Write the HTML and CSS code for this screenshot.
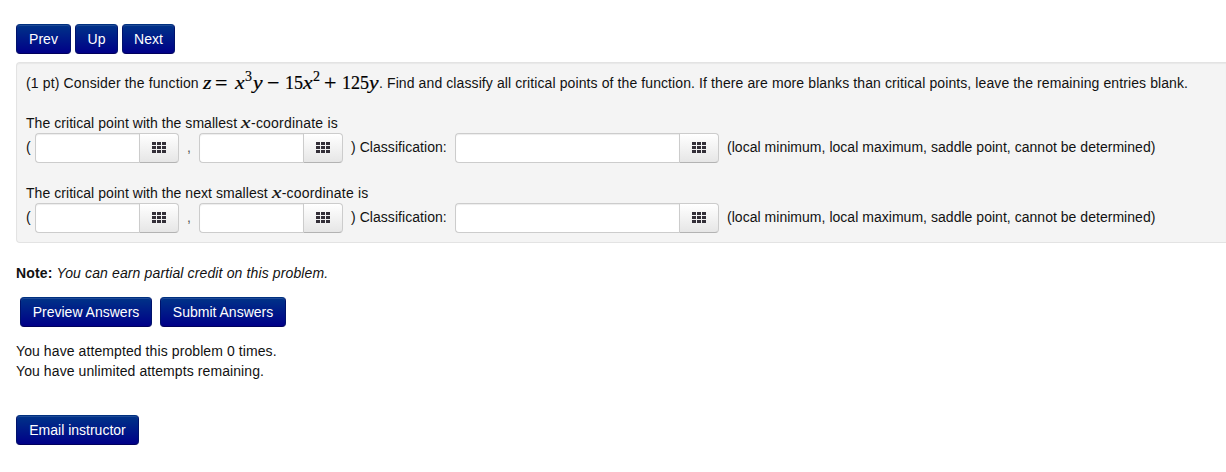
FILE: index.html
```html
<!DOCTYPE html>
<html lang="en">
<head>
  <meta charset="UTF-8">
  <title>Problem</title>
  <link rel="stylesheet" href="styles.css">
</head>
<body>
  <svg width="0" height="0" class="sprite">
    <symbol id="icon-th" viewBox="0 0 14 11">
      <path d="M0 0h4v3H0zM5 0h4v3H5zM10 0h4v3h-4zM0 4h4v3H0zM5 4h4v3H5zM10 4h4v3h-4zM0 8h4v3H0zM5 8h4v3H5zM10 8h4v3h-4z"/>
    </symbol>
  </svg>

  <nav class="nav-buttons">
    <button class="btn btn-prev">Prev</button>
    <button class="btn btn-up">Up</button>
    <button class="btn btn-next">Next</button>
  </nav>

  <form class="problem-form">
    <div class="problem">
      <div class="line">
        <span class="intro">(1 pt) Consider the function</span>
        <span class="math"><i class="v-z">z</i><span class="eq">=</span><i class="v-x">x</i><sup>3</sup><i class="v-y">y</i><span class="minus">−</span><span class="n15">15</span><i class="v-x">x</i><sup class="sq">2</sup><span class="plus">+</span><span class="n125">125</span><i class="v-last">y</i></span>
        <span class="question">. Find and classify all critical points of the function. If there are more blanks than critical points, leave the remaining entries blank.</span>
      </div>

      <div class="point">
        <div class="label">The critical point with the smallest <i class="math-x">x</i><span class="coord">-coordinate is</span></div>
        <div class="answers">
          <span class="open">(</span>
          <div class="input-append"><input type="text"><button type="button"><svg class="icon"><use href="#icon-th"/></svg></button></div>
          <span class="comma">,</span>
          <div class="input-append"><input type="text"><button type="button"><svg class="icon"><use href="#icon-th"/></svg></button></div>
          <span class="class-label">) Classification:</span>
          <div class="input-append wide"><input type="text"><button type="button"><svg class="icon"><use href="#icon-th"/></svg></button></div>
          <span class="hint">(local minimum, local maximum, saddle point, cannot be determined)</span>
        </div>
      </div>

      <div class="point">
        <div class="label">The critical point with the next smallest <i class="math-x">x</i><span class="coord">-coordinate is</span></div>
        <div class="answers">
          <span class="open">(</span>
          <div class="input-append"><input type="text"><button type="button"><svg class="icon"><use href="#icon-th"/></svg></button></div>
          <span class="comma">,</span>
          <div class="input-append"><input type="text"><button type="button"><svg class="icon"><use href="#icon-th"/></svg></button></div>
          <span class="class-label">) Classification:</span>
          <div class="input-append wide"><input type="text"><button type="button"><svg class="icon"><use href="#icon-th"/></svg></button></div>
          <span class="hint">(local minimum, local maximum, saddle point, cannot be determined)</span>
        </div>
      </div>
    </div>

    <p class="note"><b>Note:</b> <i>You can earn partial credit on this problem.</i></p>

    <div class="submit-buttons">
      <button type="button" class="btn btn-preview">Preview Answers</button>
      <button type="button" class="btn btn-submit">Submit Answers</button>
    </div>
  </form>

  <div class="attempts">
    <div class="attempted">You have attempted this problem 0 times.</div>
    <div class="remaining">You have unlimited attempts remaining.</div>
  </div>

  <button class="btn btn-email">Email instructor</button>
</body>
</html>
```
FILE: styles.css
```css
* {
  box-sizing: border-box;
}

body {
  margin: 0;
  padding: 24px 0 0 16px;
  font-family: "Liberation Sans", Arial, sans-serif;
  font-size: 14px;
  line-height: 20px;
  color: #111;
  background: #fff;
  overflow: hidden;
}

.sprite {
  display: none;
}

.btn {
  height: 30px;
  padding: 0;
  border: 1px solid #002a80;
  border-color: #003080 #00126b #00005c;
  border-radius: 4px;
  background: linear-gradient(to bottom, #003388, #000088);
  box-shadow: inset 0 1px 0 rgba(255, 255, 255, 0.12);
  color: #fff;
  font-family: inherit;
  font-size: 14px;
  line-height: 20px;
  white-space: nowrap;
}

.nav-buttons {
  display: flex;
  gap: 4px;
}

.btn-prev { width: 55px; }
.btn-up { width: 43px; }
.btn-next { width: 53px; }
.btn-preview { width: 132px; }
.btn-submit { width: 126px; }
.btn-email { display: block; width: 123px; }

.problem {
  height: 181px;
  margin-top: 8px;
  padding: 10px 0 0 9px;
  border: 1px solid #e3e3e3;
  border-right: 0;
  border-radius: 4px 0 0 4px;
  background: #f4f4f4;
  box-shadow: inset 0 1px 1px rgba(0, 0, 0, 0.05);
}

.line {
  display: flex;
  height: 20px;
  white-space: nowrap;
}

.intro {
  width: 177px;
  letter-spacing: 0.14px;
}

.question {
  letter-spacing: 0.1px;
}

.math {
  display: flex;
  width: 176px;
  font-family: "Liberation Serif", serif;
  font-size: 18px;
  color: #000;
  -webkit-text-stroke: 0.2px #000;
}

.math i,
.math sup,
.math span {
  flex: none;
}

.math i {
  transform: scaleX(1.2);
  transform-origin: left;
}

.math sup {
  width: 8px;
  font-size: 14px;
  line-height: 8px;
}

.v-z { width: 12px; }
.eq { width: 20px; font-size: 22px; }
.v-x { width: 10px; }
.v-y { width: 14px; }
.minus { width: 18px; font-size: 22px; }
.n15 { width: 18px; }
.math .sq { width: 11px; }
.plus { width: 18px; font-size: 22px; }
.n125 { width: 27px; }

.point {
  margin-top: 20px;
}

.label {
  height: 20px;
  letter-spacing: 0.05px;
}

.coord {
  letter-spacing: 0.2px;
}

.math-x {
  display: inline-block;
  width: 10px;
  font-family: "Liberation Serif", serif;
  font-size: 17px;
  line-height: 16px;
  transform: scaleX(1.25);
  transform-origin: left;
  -webkit-text-stroke: 0.2px #000;
}

.answers {
  display: flex;
  height: 30px;
  line-height: 28px;
  white-space: nowrap;
}

.open {
  width: 9px;
}

.comma {
  width: 20px;
  padding-left: 8px;
  color: #555;
}

.class-label {
  width: 112px;
  padding-left: 8px;
  letter-spacing: 0.05px;
}

.hint {
  padding-left: 8px;
  letter-spacing: 0.03px;
}

.input-append {
  display: flex;
  flex: none;
  width: 144px;
}

.input-append.wide {
  width: 264px;
}

.input-append input {
  flex: 1;
  min-width: 0;
  height: 30px;
  padding: 4px 6px;
  border: 1px solid #ccc;
  border-right: 0;
  border-radius: 4px 0 0 4px;
  background: #fff;
  box-shadow: inset 0 1px 1px rgba(0, 0, 0, 0.075);
}

.input-append button {
  display: flex;
  align-items: center;
  justify-content: center;
  width: 40px;
  height: 30px;
  padding: 0 0 1px;
  border: 1px solid #ccc;
  border-bottom-color: #b3b3b3;
  border-radius: 0 4px 4px 0;
  background: linear-gradient(to bottom, #fff, #e6e6e6);
}

.icon {
  width: 14px;
  height: 11px;
  fill: #332f38;
}

.note {
  margin: 20px 0 14px;
  letter-spacing: 0.13px;
}

.submit-buttons {
  display: flex;
  gap: 8px;
  padding-left: 4px;
}

.attempts {
  margin: 14px 0 34px;
  letter-spacing: 0.09px;
}
```
